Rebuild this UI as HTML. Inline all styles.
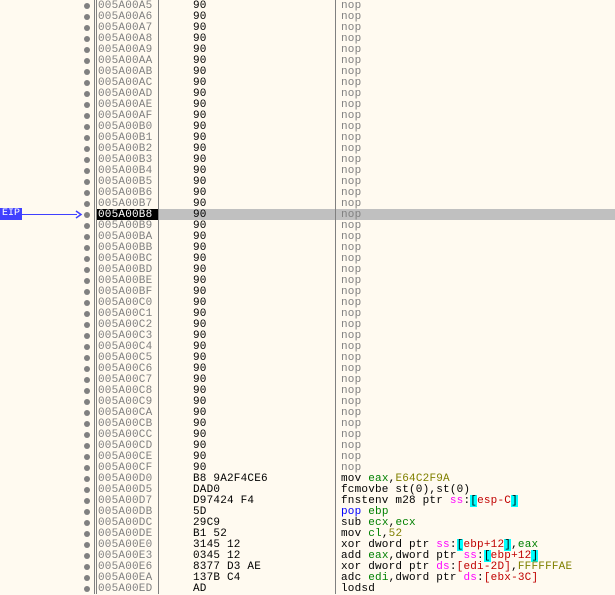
<!DOCTYPE html>
<html><head><meta charset="utf-8"><style>
html,body{margin:0;padding:0;}
body{width:615px;height:594px;background:#fffaf0;position:relative;overflow:hidden;font-family:"Liberation Mono","DejaVu Sans Mono",monospace;font-size:11px;letter-spacing:0.2px;}
.r{position:absolute;left:0;width:615px;height:11px;line-height:11px;white-space:pre;margin-top:1px;}
.d{position:absolute;left:84px;top:2px;width:6px;height:6px;border-radius:50%;background:#808080;}
.a{position:absolute;left:98px;color:#808080;}
.b{position:absolute;left:193px;color:#000;}
.i{position:absolute;left:341px;color:#000;}
.n{color:#808080}
.g{color:#008000}
.o{color:#808000}
.m{color:#ff00ff}
.rd{color:#c00000}
.bl{color:#0000ff}
.c{background:#00ffff;color:#000}
.v{position:absolute;top:0;height:594px;width:1px;background:#808080;}
</style></head><body>
<div style="position:absolute;left:159px;top:209px;width:456px;height:11px;background:#c0c0c0"></div>
<div style="position:absolute;left:96px;top:209px;width:62px;height:11px;background:#000"></div>
<div class="v" style="left:94px"></div><div class="v" style="left:96px"></div><div class="v" style="left:158px"></div><div class="v" style="left:335px"></div>
<div style="position:absolute;left:0;top:208px;width:22px;height:12px;background:#4040ff;color:#fff;font-size:10px;line-height:12px;text-align:center;letter-spacing:0">EIP</div>
<div style="position:absolute;left:22px;top:214px;width:55px;height:1px;background:#4040ff"></div>
<svg style="position:absolute;left:74px;top:210px" width="9" height="10"><path d="M2 1 L7 4.5 L2 8" stroke="#4040ff" stroke-width="1.5" fill="none"/></svg>
<div class="r" style="top:0"><span class="d"></span><span class="a">005A00A5</span><span class="b">90</span><span class="i n">nop</span></div>
<div class="r" style="top:11px"><span class="d"></span><span class="a">005A00A6</span><span class="b">90</span><span class="i n">nop</span></div>
<div class="r" style="top:22px"><span class="d"></span><span class="a">005A00A7</span><span class="b">90</span><span class="i n">nop</span></div>
<div class="r" style="top:33px"><span class="d"></span><span class="a">005A00A8</span><span class="b">90</span><span class="i n">nop</span></div>
<div class="r" style="top:44px"><span class="d"></span><span class="a">005A00A9</span><span class="b">90</span><span class="i n">nop</span></div>
<div class="r" style="top:55px"><span class="d"></span><span class="a">005A00AA</span><span class="b">90</span><span class="i n">nop</span></div>
<div class="r" style="top:66px"><span class="d"></span><span class="a">005A00AB</span><span class="b">90</span><span class="i n">nop</span></div>
<div class="r" style="top:77px"><span class="d"></span><span class="a">005A00AC</span><span class="b">90</span><span class="i n">nop</span></div>
<div class="r" style="top:88px"><span class="d"></span><span class="a">005A00AD</span><span class="b">90</span><span class="i n">nop</span></div>
<div class="r" style="top:99px"><span class="d"></span><span class="a">005A00AE</span><span class="b">90</span><span class="i n">nop</span></div>
<div class="r" style="top:110px"><span class="d"></span><span class="a">005A00AF</span><span class="b">90</span><span class="i n">nop</span></div>
<div class="r" style="top:121px"><span class="d"></span><span class="a">005A00B0</span><span class="b">90</span><span class="i n">nop</span></div>
<div class="r" style="top:132px"><span class="d"></span><span class="a">005A00B1</span><span class="b">90</span><span class="i n">nop</span></div>
<div class="r" style="top:143px"><span class="d"></span><span class="a">005A00B2</span><span class="b">90</span><span class="i n">nop</span></div>
<div class="r" style="top:154px"><span class="d"></span><span class="a">005A00B3</span><span class="b">90</span><span class="i n">nop</span></div>
<div class="r" style="top:165px"><span class="d"></span><span class="a">005A00B4</span><span class="b">90</span><span class="i n">nop</span></div>
<div class="r" style="top:176px"><span class="d"></span><span class="a">005A00B5</span><span class="b">90</span><span class="i n">nop</span></div>
<div class="r" style="top:187px"><span class="d"></span><span class="a">005A00B6</span><span class="b">90</span><span class="i n">nop</span></div>
<div class="r" style="top:198px"><span class="d"></span><span class="a">005A00B7</span><span class="b">90</span><span class="i n">nop</span></div>
<div class="r" style="top:209px"><span class="d"></span><span class="a" style="color:#fff">005A00B8</span><span class="b">90</span><span class="i n">nop</span></div>
<div class="r" style="top:220px"><span class="d"></span><span class="a">005A00B9</span><span class="b">90</span><span class="i n">nop</span></div>
<div class="r" style="top:231px"><span class="d"></span><span class="a">005A00BA</span><span class="b">90</span><span class="i n">nop</span></div>
<div class="r" style="top:242px"><span class="d"></span><span class="a">005A00BB</span><span class="b">90</span><span class="i n">nop</span></div>
<div class="r" style="top:253px"><span class="d"></span><span class="a">005A00BC</span><span class="b">90</span><span class="i n">nop</span></div>
<div class="r" style="top:264px"><span class="d"></span><span class="a">005A00BD</span><span class="b">90</span><span class="i n">nop</span></div>
<div class="r" style="top:275px"><span class="d"></span><span class="a">005A00BE</span><span class="b">90</span><span class="i n">nop</span></div>
<div class="r" style="top:286px"><span class="d"></span><span class="a">005A00BF</span><span class="b">90</span><span class="i n">nop</span></div>
<div class="r" style="top:297px"><span class="d"></span><span class="a">005A00C0</span><span class="b">90</span><span class="i n">nop</span></div>
<div class="r" style="top:308px"><span class="d"></span><span class="a">005A00C1</span><span class="b">90</span><span class="i n">nop</span></div>
<div class="r" style="top:319px"><span class="d"></span><span class="a">005A00C2</span><span class="b">90</span><span class="i n">nop</span></div>
<div class="r" style="top:330px"><span class="d"></span><span class="a">005A00C3</span><span class="b">90</span><span class="i n">nop</span></div>
<div class="r" style="top:341px"><span class="d"></span><span class="a">005A00C4</span><span class="b">90</span><span class="i n">nop</span></div>
<div class="r" style="top:352px"><span class="d"></span><span class="a">005A00C5</span><span class="b">90</span><span class="i n">nop</span></div>
<div class="r" style="top:363px"><span class="d"></span><span class="a">005A00C6</span><span class="b">90</span><span class="i n">nop</span></div>
<div class="r" style="top:374px"><span class="d"></span><span class="a">005A00C7</span><span class="b">90</span><span class="i n">nop</span></div>
<div class="r" style="top:385px"><span class="d"></span><span class="a">005A00C8</span><span class="b">90</span><span class="i n">nop</span></div>
<div class="r" style="top:396px"><span class="d"></span><span class="a">005A00C9</span><span class="b">90</span><span class="i n">nop</span></div>
<div class="r" style="top:407px"><span class="d"></span><span class="a">005A00CA</span><span class="b">90</span><span class="i n">nop</span></div>
<div class="r" style="top:418px"><span class="d"></span><span class="a">005A00CB</span><span class="b">90</span><span class="i n">nop</span></div>
<div class="r" style="top:429px"><span class="d"></span><span class="a">005A00CC</span><span class="b">90</span><span class="i n">nop</span></div>
<div class="r" style="top:440px"><span class="d"></span><span class="a">005A00CD</span><span class="b">90</span><span class="i n">nop</span></div>
<div class="r" style="top:451px"><span class="d"></span><span class="a">005A00CE</span><span class="b">90</span><span class="i n">nop</span></div>
<div class="r" style="top:462px"><span class="d"></span><span class="a">005A00CF</span><span class="b">90</span><span class="i n">nop</span></div>
<div class="r" style="top:473px"><span class="d"></span><span class="a">005A00D0</span><span class="b">B8 9A2F4CE6</span><span class="i">mov <span class="g">eax</span>,<span class="o">E64C2F9A</span></span></div>
<div class="r" style="top:484px"><span class="d"></span><span class="a">005A00D5</span><span class="b">DAD0</span><span class="i">fcmovbe st(0),st(0)</span></div>
<div class="r" style="top:495px"><span class="d"></span><span class="a">005A00D7</span><span class="b">D97424 F4</span><span class="i">fnstenv m28 ptr <span class="m">ss</span>:<span class="c">[</span><span class="rd">esp-C</span><span class="c">]</span></span></div>
<div class="r" style="top:506px"><span class="d"></span><span class="a">005A00DB</span><span class="b">5D</span><span class="i"><span class="bl">pop</span> <span class="g">ebp</span></span></div>
<div class="r" style="top:517px"><span class="d"></span><span class="a">005A00DC</span><span class="b">29C9</span><span class="i">sub <span class="g">ecx</span>,<span class="g">ecx</span></span></div>
<div class="r" style="top:528px"><span class="d"></span><span class="a">005A00DE</span><span class="b">B1 52</span><span class="i">mov <span class="g">cl</span>,<span class="o">52</span></span></div>
<div class="r" style="top:539px"><span class="d"></span><span class="a">005A00E0</span><span class="b">3145 12</span><span class="i">xor dword ptr <span class="m">ss</span>:<span class="c">[</span><span class="rd">ebp+12</span><span class="c">]</span>,<span class="g">eax</span></span></div>
<div class="r" style="top:550px"><span class="d"></span><span class="a">005A00E3</span><span class="b">0345 12</span><span class="i">add <span class="g">eax</span>,dword ptr <span class="m">ss</span>:<span class="c">[</span><span class="rd">ebp+12</span><span class="c">]</span></span></div>
<div class="r" style="top:561px"><span class="d"></span><span class="a">005A00E6</span><span class="b">8377 D3 AE</span><span class="i">xor dword ptr <span class="m">ds</span>:<span class="rd">[edi-2D]</span>,<span class="o">FFFFFFAE</span></span></div>
<div class="r" style="top:572px"><span class="d"></span><span class="a">005A00EA</span><span class="b">137B C4</span><span class="i">adc <span class="g">edi</span>,dword ptr <span class="m">ds</span>:<span class="rd">[ebx-3C]</span></span></div>
<div class="r" style="top:583px"><span class="d"></span><span class="a">005A00ED</span><span class="b">AD</span><span class="i">lodsd</span></div>
</body></html>
